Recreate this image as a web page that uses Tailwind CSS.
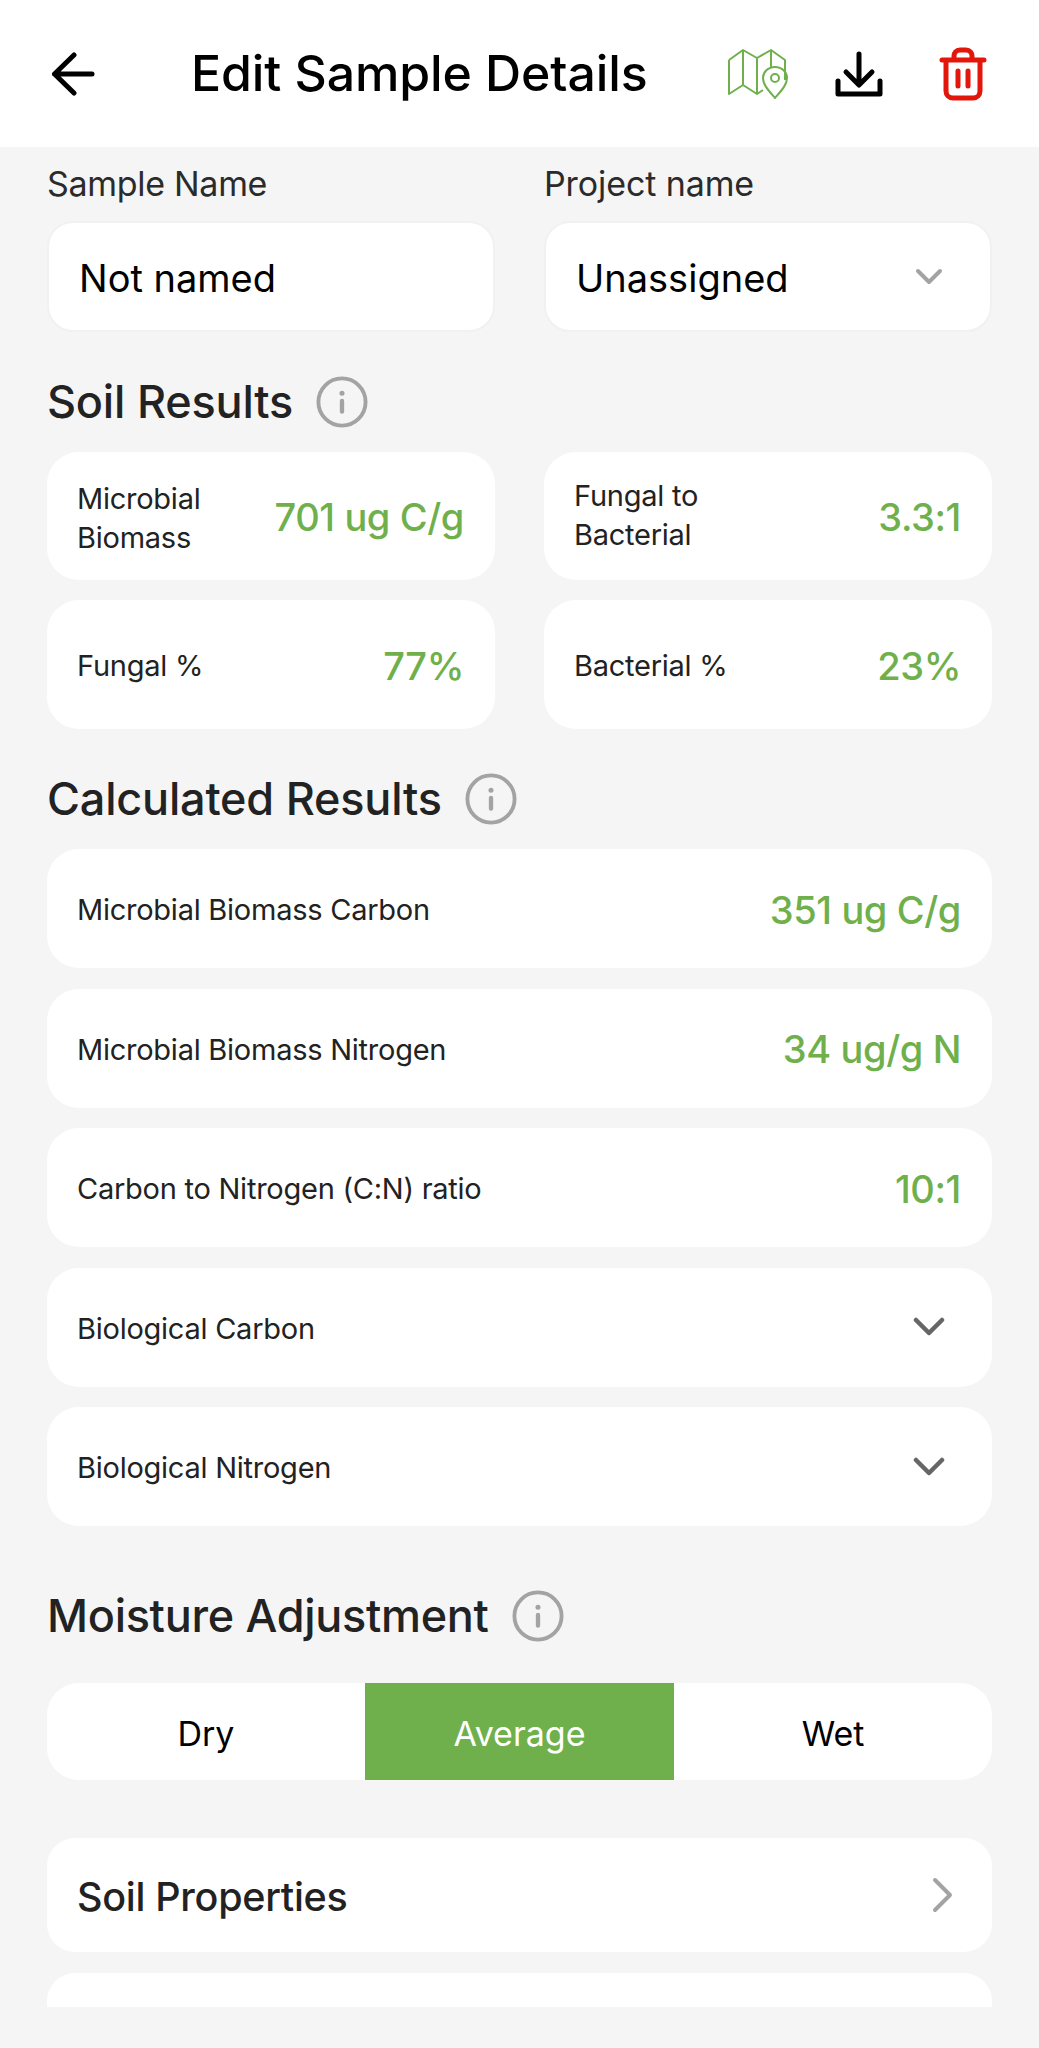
<!DOCTYPE html>
<html lang="en">
<head>
  <meta charset="UTF-8">
  <meta name="viewport" content="width=device-width, initial-scale=1.0">
  <title>Edit Sample Details</title>
  <script src="https://cdn.jsdelivr.net/npm/@tailwindcss/browser@4"></script>
</head>
<body class="bg-[#f5f5f5] font-['Inter',sans-serif] text-[#222222]">
  <div class="w-[1039px] h-[2048px] overflow-hidden">

    <!-- Header -->
    <header class="h-[147px] bg-white flex items-center pl-[51px] pr-[52px]">
      <svg class="w-[44px] h-[44px] shrink-0" viewBox="0 0 44 44" fill="none" stroke="#000" stroke-width="5" stroke-linecap="round" stroke-linejoin="round"><path d="M41 22H3.5M23 3 3.5 22 23 41"/></svg>
      <h1 class="ml-[96px] text-[50px] font-medium tracking-[-0.1px] text-black whitespace-nowrap">Edit Sample Details</h1>
      <div class="ml-auto flex items-center">
        <svg class="w-[62px] h-[52px] mr-[46px]" viewBox="0 0 62 52" fill="none" stroke="#6fb04c" stroke-width="2" stroke-linejoin="round"><path d="M2 12 16 2l14 8 14-8 14 10v20M2 12v34l14-9 14 9 6-4M16 2v35M30 10v36M44 2v17"/><path d="M48 19c7 0 12 5 12 11 0 7-6 13-12 20-6-7-12-13-12-20 0-6 5-11 12-11Z"/><circle cx="48" cy="30" r="4"/></svg>
        <svg class="w-[48px] h-[46px] mr-[56px]" viewBox="0 0 48 46" fill="none" stroke="#000" stroke-width="5" stroke-linecap="round" stroke-linejoin="round"><path d="M24 3v30M11 21l13 13 13-13M3 30v13h42V30"/></svg>
        <svg class="w-[48px] h-[54px]" viewBox="0 0 48 54" fill="none" stroke="#e3160b" stroke-width="5" stroke-linecap="round" stroke-linejoin="round"><path d="M3 13h42M7 13v31c0 4 3 7 7 7h20c4 0 7-3 7-7V13M15 12V9c0-3 2-6 6-6h6c4 0 6 3 6 6v3"/><path d="M19 24v15M29 24v15"/></svg>
      </div>
    </header>

    <main class="px-[47px]">
      <!-- Name fields -->
      <div class="grid grid-cols-2 gap-x-[49px] pt-[18px]">
        <div>
          <div class="h-[38px] text-[34px] leading-[38px] tracking-[-0.3px] text-[#2b2b2b]">Sample Name</div>
          <div class="mt-[18px] h-[111px] pt-[4px] bg-white border-2 border-[#f1f1f1] rounded-[26px] flex items-center pl-[30px] text-[38px] text-black">Not named</div>
        </div>
        <div>
          <div class="h-[38px] text-[34px] leading-[38px] tracking-[-0.1px] text-[#2b2b2b]">Project name</div>
          <div class="mt-[18px] h-[111px] bg-white border-2 border-[#f1f1f1] rounded-[26px] flex items-center justify-between pl-[30px] pr-[47px] text-[38px] text-black">
            <span class="pt-[4px]">Unassigned</span>
            <svg class="w-[28px] h-[18px]" viewBox="0 0 28 18" fill="none" stroke="#a3a3a3" stroke-width="4" stroke-linecap="round" stroke-linejoin="round"><path d="M3 3l11 11L25 3"/></svg>
          </div>
        </div>
      </div>

      <!-- Soil results -->
      <div class="mt-[42px] h-[56px] flex items-center">
        <h2 class="text-[45px] font-medium tracking-[-0.2px]">Soil Results</h2>
        <svg class="ml-[23px] w-[52px] h-[52px]" viewBox="0 0 54 54" fill="none"><circle cx="27" cy="27" r="24.5" stroke="#a3a3a3" stroke-width="4"/><circle cx="27" cy="18" r="2.6" fill="#a3a3a3"/><path d="M27 26v11" stroke="#a3a3a3" stroke-width="4.5" stroke-linecap="round"/></svg>
      </div>
      <div class="mt-[22px] grid grid-cols-2 gap-x-[49px] gap-y-[20px]">
        <div class="h-[128px] pt-[3px] bg-white rounded-[32px] flex items-center justify-between pl-[30px] pr-[31px]">
          <span class="text-[29px] leading-[39px] tracking-[-0.25px]">Microbial<br>Biomass</span>
          <span class="text-[38px] font-medium tracking-[-0.4px] text-[#6fb04c]">701 ug C/g</span>
        </div>
        <div class="h-[128px] pt-[3px] bg-white rounded-[32px] flex items-center justify-between pl-[30px] pr-[31px]">
          <span class="text-[29px] leading-[39px] tracking-[-0.25px] mt-[-6px]">Fungal to<br>Bacterial</span>
          <span class="text-[38px] font-medium tracking-[-0.4px] text-[#6fb04c]">3.3:1</span>
        </div>
        <div class="h-[129px] pt-[3px] bg-white rounded-[32px] flex items-center justify-between pl-[30px] pr-[31px]">
          <span class="text-[29px] tracking-[-0.25px]">Fungal %</span>
          <span class="text-[38px] font-medium tracking-[-0.4px] text-[#6fb04c]">77%</span>
        </div>
        <div class="h-[129px] pt-[3px] bg-white rounded-[32px] flex items-center justify-between pl-[30px] pr-[31px]">
          <span class="text-[29px] tracking-[-0.25px]">Bacterial %</span>
          <span class="text-[38px] font-medium tracking-[-0.4px] text-[#6fb04c]">23%</span>
        </div>
      </div>

      <!-- Calculated results -->
      <div class="mt-[42px] h-[56px] flex items-center">
        <h2 class="text-[45px] font-medium tracking-[-0.2px]">Calculated Results</h2>
        <svg class="ml-[23px] w-[52px] h-[52px]" viewBox="0 0 54 54" fill="none"><circle cx="27" cy="27" r="24.5" stroke="#a3a3a3" stroke-width="4"/><circle cx="27" cy="18" r="2.6" fill="#a3a3a3"/><path d="M27 26v11" stroke="#a3a3a3" stroke-width="4.5" stroke-linecap="round"/></svg>
      </div>
      <div class="mt-[22px] flex flex-col gap-[20.5px]">
        <div class="h-[119px] pt-[3px] bg-white rounded-[32px] flex items-center justify-between pl-[30px] pr-[31px]">
          <span class="text-[29px] tracking-[-0.25px]">Microbial Biomass Carbon</span>
          <span class="text-[38px] font-medium tracking-[-0.4px] text-[#6fb04c]">351 ug C/g</span>
        </div>
        <div class="h-[119px] pt-[3px] bg-white rounded-[32px] flex items-center justify-between pl-[30px] pr-[31px]">
          <span class="text-[29px] tracking-[-0.25px]">Microbial Biomass Nitrogen</span>
          <span class="text-[38px] font-medium tracking-[-0.4px] text-[#6fb04c]">34 ug/g N</span>
        </div>
        <div class="h-[119px] pt-[3px] bg-white rounded-[32px] flex items-center justify-between pl-[30px] pr-[31px]">
          <span class="text-[29px] tracking-[-0.25px]">Carbon to Nitrogen (C:N) ratio</span>
          <span class="text-[38px] font-medium tracking-[-0.4px] text-[#6fb04c]">10:1</span>
        </div>
        <div class="h-[119px] bg-white rounded-[32px] flex items-center justify-between pl-[30px] pr-[47px]">
          <span class="text-[29px] tracking-[-0.25px] pt-[3px]">Biological Carbon</span>
          <svg class="w-[32px] h-[20px]" viewBox="0 0 32 20" fill="none" stroke="#666666" stroke-width="4.5" stroke-linecap="round" stroke-linejoin="round"><path d="M3 3l13 13L29 3"/></svg>
        </div>
        <div class="h-[119px] bg-white rounded-[32px] flex items-center justify-between pl-[30px] pr-[47px]">
          <span class="text-[29px] tracking-[-0.25px] pt-[3px]">Biological Nitrogen</span>
          <svg class="w-[32px] h-[20px]" viewBox="0 0 32 20" fill="none" stroke="#666666" stroke-width="4.5" stroke-linecap="round" stroke-linejoin="round"><path d="M3 3l13 13L29 3"/></svg>
        </div>
      </div>

      <!-- Moisture adjustment -->
      <div class="mt-[62px] h-[56px] flex items-center">
        <h2 class="text-[45px] font-medium tracking-[-0.3px]">Moisture Adjustment</h2>
        <svg class="ml-[23px] w-[52px] h-[52px]" viewBox="0 0 54 54" fill="none"><circle cx="27" cy="27" r="24.5" stroke="#a3a3a3" stroke-width="4"/><circle cx="27" cy="18" r="2.6" fill="#a3a3a3"/><path d="M27 26v11" stroke="#a3a3a3" stroke-width="4.5" stroke-linecap="round"/></svg>
      </div>
      <div class="mt-[39px] h-[97px] bg-white rounded-[32px] overflow-hidden flex text-[34px] text-black">
        <div class="w-[318px] pt-[3px] flex items-center justify-center">Dry</div>
        <div class="w-[309px] pt-[3px] bg-[#6fb04c] text-white flex items-center justify-center">Average</div>
        <div class="flex-1 pt-[3px] flex items-center justify-center">Wet</div>
      </div>

      <!-- Collapsed sections -->
      <div class="mt-[58px] h-[114px] bg-white rounded-[28px] flex items-center justify-between pl-[30px] pr-[38px]">
        <span class="text-[39.5px] font-medium tracking-[-0.3px] pt-[5px]">Soil Properties</span>
        <svg class="w-[22px] h-[36px]" viewBox="0 0 22 36" fill="none" stroke="#a3a3a3" stroke-width="4" stroke-linecap="round" stroke-linejoin="round"><path d="M3 3l15 15L3 33"/></svg>
      </div>
      <div class="mt-[21px] h-[34px] bg-white rounded-t-[28px]"></div>
    </main>
  </div>
</body>
</html>
